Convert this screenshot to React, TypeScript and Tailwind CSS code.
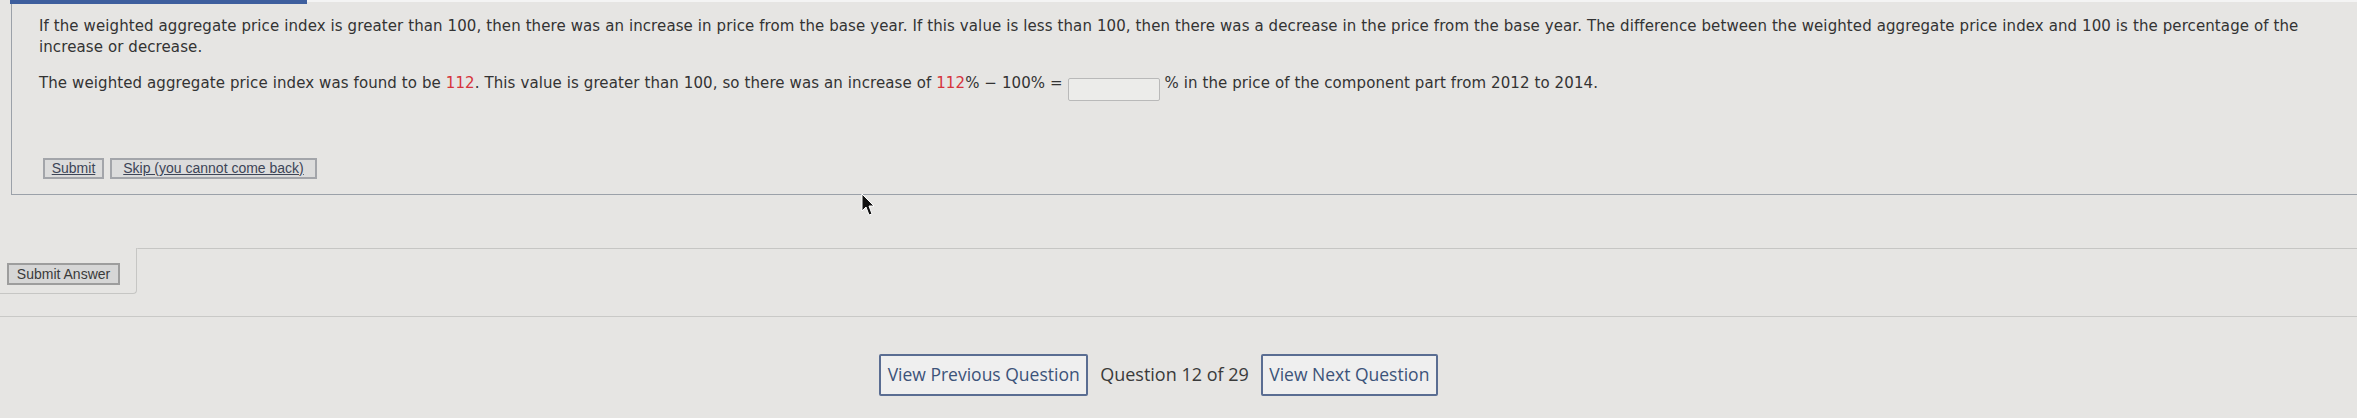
export default function App() {
  const body = "font-['DejaVu_Sans',Verdana,sans-serif]";
  return (
    <div className="relative min-h-[418px] w-[2357px] overflow-hidden bg-[#e6e5e3] text-[#333]">
      {/* top strip */}
      <div className="flex h-[4px] items-start">
        <div className="ml-[10px] h-[4px] w-[297px] bg-[#3e5f9e]" />
        <div className="h-[2px] flex-1 bg-[#f4f4f4]" />
      </div>

      {/* question panel */}
      <div className={`ml-[11px] border-b border-l border-[#9ba1a9] pb-[15px] pl-[27px] pr-[40px] pt-[12px] text-[15px] leading-[21px] tracking-[0.1px] ${body}`}>
        <p>
          If the weighted aggregate price index is greater than 100, then there was an increase in price from the base year. If this value is less than 100, then there was a decrease in the price from the base year. The difference between the weighted aggregate price index and 100 is the percentage of the increase or decrease.
        </p>
        <p className="mt-[15px]">
          The weighted aggregate price index was found to be <span className="text-[#d6343c]">112</span>. This value is greater than 100, so there was an increase of{' '}
          <span className="text-[#d6343c]">112</span>% − 100% ={' '}
          <input
            type="text"
            className="inline-block h-[23px] w-[92px] rounded-[2px] border border-[#b9b9b9] bg-[#ececea] align-[-6px] outline-none"
          />{' '}
          % in the price of the component part from 2012 to 2014.
        </p>
        <div className="ml-[4px] mt-[57px] flex gap-[6px] font-['Liberation_Sans',Arial,sans-serif] text-[14px] leading-none tracking-normal">
          <button className="h-[21px] w-[61px] border-2 border-[#a3a5aa] bg-[#dcdcdc] text-[#3d4557] underline">
            Submit
          </button>
          <button className="h-[21px] w-[207px] border-2 border-[#a3a5aa] bg-[#dcdcdc] text-[#3d4557] underline">
            Skip (you cannot come back)
          </button>
        </div>
      </div>

      {/* submit answer row */}
      <div className="mt-[53px] flex h-[69px] items-start border-b border-[#c9c9c7]">
        <div className="flex h-[46px] w-[137px] items-start rounded-br-[4px] border-b border-r border-[#c6c6c4] pl-[7px] pt-[15px]">
          <button className="h-[22px] w-[113px] border-2 border-[#9d9d9d] bg-[#d6d6d6] font-['Liberation_Sans',Arial,sans-serif] text-[14px] leading-none text-[#3a3a3a]">
            Submit Answer
          </button>
        </div>
        <div className="flex-1 rounded-tl-[4px] border-t border-[#c6c6c4]" />
      </div>

      {/* navigation */}
      <div className="mt-[37px] flex items-center justify-center gap-[12px] pr-[40px] font-['Open_Sans',sans-serif] text-[17.5px]">
        <button className="h-[42px] w-[209px] rounded-[2px] border-2 border-[#5a6d92] bg-[#efefef] text-[#3c5379]">
          View Previous Question
        </button>
        <span className="text-[18px] text-[#3a3a3a]">Question 12 of 29</span>
        <button className="h-[42px] w-[177px] rounded-[2px] border-2 border-[#5a6d92] bg-[#efefef] text-[#3c5379]">
          View Next Question
        </button>
      </div>

      {/* mouse pointer */}
      <svg className="absolute left-[861px] top-[193px]" width="14" height="24" viewBox="0 0 14 24">
        <path d="M1 1 L1 18 L5 14 L8 22 L11 21 L8 13 L13 13 Z" fill="#111" stroke="#fff" strokeWidth="1" />
      </svg>
    </div>
  );
}
